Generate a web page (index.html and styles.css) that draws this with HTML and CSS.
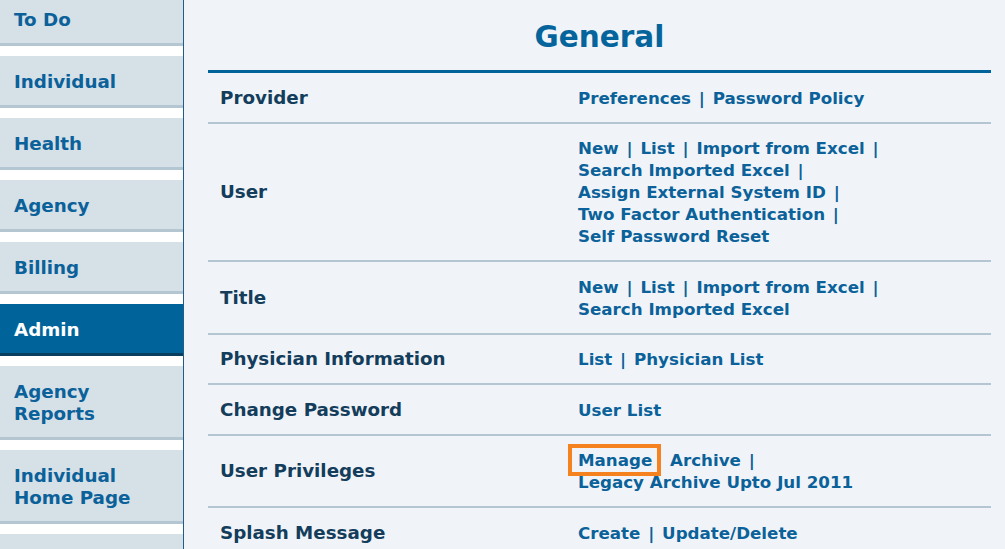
FILE: index.html
```html
<!DOCTYPE html>
<html lang="en">
<head>
<meta charset="utf-8">
<title>General</title>
<link rel="stylesheet" href="styles.css">
</head>
<body>
<div class="layout">
  <nav class="sidebar">
    <ul class="nav-list">
      <li class="nav-item">To Do</li>
      <li class="nav-item">Individual</li>
      <li class="nav-item">Health</li>
      <li class="nav-item">Agency</li>
      <li class="nav-item">Billing</li>
      <li class="nav-item active">Admin</li>
      <li class="nav-item">Agency<br>Reports</li>
      <li class="nav-item">Individual<br>Home Page</li>
      <li class="nav-item">&nbsp;</li>
    </ul>
  </nav>
  <main class="main">
    <h1 class="title">General</h1>
    <div class="table">
      <div class="row">
        <div class="label">Provider</div>
        <div class="links">Preferences <span class="sep">|</span> Password Policy</div>
      </div>
      <div class="row">
        <div class="label">User</div>
        <div class="links">New <span class="sep">|</span> List <span class="sep">|</span> Import from Excel <span class="sep">|</span><br>Search Imported Excel <span class="sep">|</span><br>Assign External System ID <span class="sep">|</span><br>Two Factor Authentication <span class="sep">|</span><br>Self Password Reset</div>
      </div>
      <div class="row">
        <div class="label">Title</div>
        <div class="links">New <span class="sep">|</span> List <span class="sep">|</span> Import from Excel <span class="sep">|</span><br>Search Imported Excel</div>
      </div>
      <div class="row">
        <div class="label">Physician Information</div>
        <div class="links">List <span class="sep">|</span> Physician List</div>
      </div>
      <div class="row">
        <div class="label">Change Password</div>
        <div class="links">User List</div>
      </div>
      <div class="row">
        <div class="label">User Privileges</div>
        <div class="links"><span class="highlight">Manage</span> <span class="sep sep-under">|</span> Archive <span class="sep">|</span><br>Legacy Archive Upto Jul 2011</div>
      </div>
      <div class="row">
        <div class="label">Splash Message</div>
        <div class="links">Create <span class="sep">|</span> Update/Delete</div>
      </div>
    </div>
  </main>
</div>
</body>
</html>
```
FILE: styles.css
```css
html, body {
  margin: 0;
  padding: 0;
  height: 100%;
  overflow: hidden;
}
body {
  font-family: "DejaVu Sans", Verdana, sans-serif;
  font-weight: bold;
  font-size: 18.3px;
  line-height: 22px;
  background: #f0f4f8;
}
.layout {
  display: flex;
  min-height: 100%;
}
.sidebar {
  width: 183px;
  flex: none;
  background: #ffffff;
  border-right: 1px solid #1e5d88;
}
.nav-list {
  list-style: none;
  margin: -6px 0 0 0;
  padding: 0;
  display: flex;
  flex-direction: column;
  gap: 10px;
}
.nav-item {
  background: #d6e0e7;
  border-bottom: 3px solid #b3c6d2;
  color: #0b6199;
  padding: 15px 10px 12px 14px;
}
.nav-item.active {
  background: #00649b;
  border-bottom-color: #083f5f;
  color: #ffffff;
}
.main {
  flex: 1;
  padding: 0 14px 0 24px;
}
.title {
  margin: 0;
  padding: 20px 0 16px;
  font-size: 29.5px;
  line-height: 34px;
  text-align: center;
  color: #05649c;
}
.table {
  border-top: 3px solid #00649b;
}
.row {
  display: grid;
  grid-template-columns: 358px 1fr;
  border-bottom: 2px solid #b3c6d2;
}
.label {
  display: flex;
  align-items: center;
  padding: 13.5px 12px 13px;
  color: #143d5c;
}
.links {
  padding: 13.5px 12px 13px;
  font-size: 16.7px;
  color: #0b6199;
}
.sep {
  padding: 0 2px;
}
.sep-under {
  padding-left: 0;
  margin-left: -2px;
}
.highlight {
  position: relative;
}
.highlight::after {
  content: "";
  position: absolute;
  left: -10px;
  top: -6px;
  width: 93px;
  height: 32px;
  box-sizing: border-box;
  border: 4px solid #f5821f;
}
```
